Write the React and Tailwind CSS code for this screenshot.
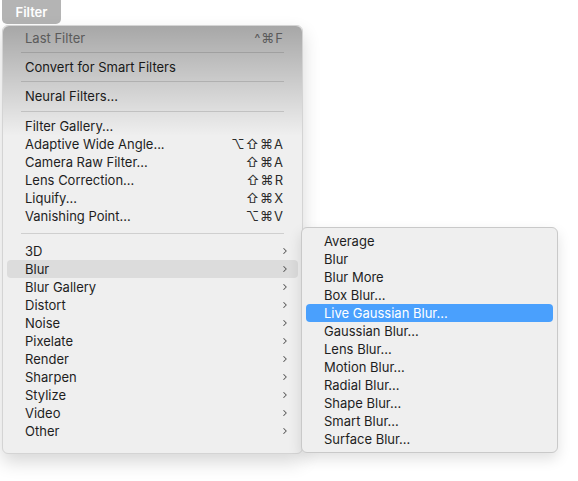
import { ChevronRight } from 'lucide-react';

const topItems = [
  { label: 'Filter Gallery...' },
  { label: 'Adaptive Wide Angle...', keys: '⌥⇧⌘A' },
  { label: 'Camera Raw Filter...', keys: '⇧⌘A' },
  { label: 'Lens Correction...', keys: '⇧⌘R' },
  { label: 'Liquify...', keys: '⇧⌘X' },
  { label: 'Vanishing Point...', keys: '⌥⌘V' },
];

const groups = ['3D', 'Blur', 'Blur Gallery', 'Distort', 'Noise', 'Pixelate', 'Render', 'Sharpen', 'Stylize', 'Video', 'Other'];

const blurItems = [
  'Average', 'Blur', 'Blur More', 'Box Blur...', 'Live Gaussian Blur...', 'Gaussian Blur...',
  'Lens Blur...', 'Motion Blur...', 'Radial Blur...', 'Shape Blur...', 'Smart Blur...', 'Surface Blur...',
];

function Row({ label, keys, disabled, active, submenu }) {
  return (
    <div
      className={`mx-[4px] h-[18px] flex items-center pl-[18px] rounded-[4px] ${
        active ? 'bg-[#dcdcdc]' : ''
      } ${submenu ? 'pr-[8px]' : 'pr-[14px]'}`}
    >
      <span className={`flex-1 ${disabled ? 'text-[#7c7c7c]' : 'text-[#1e1e1e]'}`}>{label}</span>
      {keys && (
        <span className={`tracking-[1px] ${disabled ? 'text-[#7c7c7c]' : 'text-[#2a2a2a]'}`}>{keys}</span>
      )}
      {submenu && <ChevronRight size={10} strokeWidth={2.5} className="text-[#555]" />}
    </div>
  );
}

function Separator({ className = '' }) {
  return <div className={`mx-[18px] h-px bg-[#cfcfcf] ${className}`} />;
}

export default function App() {
  return (
    <div
      className="relative w-[578px] h-[481px] bg-white overflow-hidden text-[13px] leading-[18px]"
      style={{ fontFamily: 'Inter, "Noto Sans", "DejaVu Sans", sans-serif' }}
    >
      {/* menu bar title */}
      <div className="ml-[2px] w-[59px] h-[24px] rounded-b-[5px] bg-[#b4b4b4] flex items-center justify-center text-white font-semibold">
        Filter
      </div>

      {/* Filter menu */}
      <div className="relative mt-[1px] ml-[2px] w-[301px] pt-[3px] pb-[13px] rounded-[6px] bg-[#efefef] border border-[#d4d4d4] shadow-[0_8px_18px_rgba(0,0,0,0.16)]">
        <Row label="Last Filter" keys="^⌘F" disabled />
        <Separator className="my-[5px]" />
        <Row label="Convert for Smart Filters" />
        <Separator className="my-[5px]" />
        <Row label="Neural Filters..." />
        <Separator className="mt-[6px] mb-[5px]" />
        {topItems.map((it) => (
          <Row key={it.label} label={it.label} keys={it.keys} />
        ))}
        <Separator className="mt-[8px] mb-[8px]" />
        {groups.map((g) => (
          <Row key={g} label={g} submenu active={g === 'Blur'} />
        ))}

        {/* dimmed top edge under the menu bar */}
        <div className="pointer-events-none absolute inset-x-0 top-0 h-[110px] rounded-t-[6px] bg-[linear-gradient(to_bottom,rgba(0,0,0,0.3),rgba(0,0,0,0))]" />
      </div>

      {/* Blur submenu */}
      <div className="absolute left-[301px] top-[227px] w-[257px] py-[4px] rounded-[6px] bg-[#efefef] border border-[#c9c9c9] shadow-[0_6px_14px_rgba(0,0,0,0.12)]">
        {blurItems.map((b) => (
          <div
            key={b}
            className={`mx-[4px] h-[18px] flex items-center pl-[18px] rounded-[4px] ${
              b === 'Live Gaussian Blur...' ? 'bg-[#4aa0fd] text-white' : 'text-[#1e1e1e]'
            }`}
          >
            {b}
          </div>
        ))}
      </div>
    </div>
  );
}
